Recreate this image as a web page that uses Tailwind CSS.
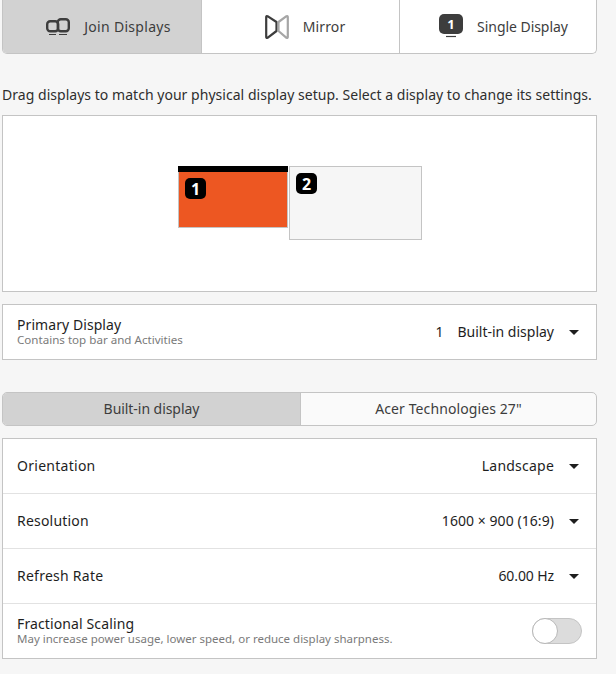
<!DOCTYPE html>
<html><head><meta charset="utf-8"><script src="https://cdn.jsdelivr.net/npm/@tailwindcss/browser@4"></script></head>
<body class="bg-[#f6f6f6] font-['Noto_Sans',sans-serif] text-[14px] text-[#1e1e1e] overflow-hidden">
<div class="w-[616px] h-[674px] pl-[2px] pr-[19px] flex flex-col">
  <div class="flex h-[54px] border border-t-0 border-[#c4c4c4] rounded-b-[5px] bg-white overflow-hidden text-[#3d3d3d]">
    <div class="w-[199px] bg-[#d2d2d2] border-r border-[#c4c4c4] flex items-center justify-center gap-[14px] pl-[13px]">
      <svg width="24" height="20" viewBox="0 0 24 20" fill="none"><rect x="1.2" y="4.2" width="11" height="10" rx="3" stroke="#3d3d3d" stroke-width="2.4"/><rect x="11.8" y="2.2" width="11" height="12" rx="3" stroke="#3d3d3d" stroke-width="2.4"/><path d="M3 17.5h7M13 17.5h8" stroke="#3d3d3d" stroke-width="1.2"/></svg>
      <span class="tracking-[0.3px]">Join Displays</span>
    </div>
    <div class="w-[198px] border-r border-[#c4c4c4] flex items-center justify-center gap-[14px] pl-[9px]">
      <svg width="24" height="26" viewBox="0 0 24 26" fill="none"><path d="M11.5 8 L2.5 2.2 Q1.2 1.6 1.2 3 V23 Q1.2 24.4 2.5 23.8 L11.5 17 Z" stroke="#3d3d3d" stroke-width="2.2" stroke-linejoin="round"/><path d="M13.5 8 L21.5 2.2 Q22.8 1.6 22.8 3 V23 Q22.8 24.4 21.5 23.8 L13.5 17 Z" stroke="#a6a6a6" stroke-width="2.2" stroke-linejoin="round"/></svg>
      <span class="tracking-[0.15px]">Mirror</span>
    </div>
    <div class="flex-1 flex items-center justify-center gap-[14px] pl-[11px]">
      <svg class="-translate-y-[1px]" width="24" height="24" viewBox="0 0 24 24" fill="none"><rect x="0" y="0" width="24" height="20" rx="5" fill="#3d3d3d"/><path d="M7 22.5h10" stroke="#3d3d3d" stroke-width="1.2"/><text x="12" y="15" text-anchor="middle" font-size="13" font-weight="700" fill="#fff" font-family="Noto Sans">1</text></svg>
      <span class="tracking-[-0.05px]">Single Display</span>
    </div>
  </div>

  <p class="mt-[30px] h-[21px] leading-[21px] whitespace-nowrap text-[#2e2e2e] tracking-[0.033px]">Drag displays to match your physical display setup. Select a display to change its settings.</p>

  <div class="relative mt-[10px] h-[177px] bg-white border border-[#c4c4c4]">
    <div class="absolute left-[175px] top-[50px] w-[110px] h-[62px] bg-[#ed5722] border border-[#c4c4c4] border-t-0">
      <div class="h-[6px] bg-black -mx-[1px]"></div>
      <div class="absolute left-[6px] top-[12px] w-[21px] h-[21px] rounded-[5px] bg-black text-white font-bold text-[16px] flex items-center justify-center leading-none">1</div>
    </div>
    <div class="absolute left-[286px] top-[50px] w-[133px] h-[74px] bg-[#f6f6f6] border border-[#c4c4c4]">
      <div class="absolute left-[6px] top-[6px] w-[21px] h-[21px] rounded-[5px] bg-black text-white font-bold text-[16px] flex items-center justify-center leading-none">2</div>
    </div>
  </div>

  <div class="mt-[12px] h-[56px] bg-white border border-[#c4c4c4] flex items-center pl-[14px] pr-[17px]">
    <div class="flex-1 flex flex-col">
      <span class="leading-[16px] text-[#1e1e1e] tracking-[0.07px]">Primary Display</span>
      <span class="text-[11.6px] leading-[14px] text-[#7a7a7a]">Contains top bar and Activities</span>
    </div>
    <span class="mr-[14px] pb-[2px]">1</span>
    <span class="pb-[2px]">Built-in display</span>
    <svg class="ml-[15px]" width="10" height="5" viewBox="0 0 10 5"><path d="M0 0h10L5 5z" fill="#1e1e1e"/></svg>
  </div>

  <div class="mt-[32px] h-[34px] flex bg-[#fafafa] border border-[#c4c4c4] rounded-[5px] overflow-hidden text-[#3d3d3d]">
    <div class="w-[298px] bg-[#d2d2d2] border-r border-[#c4c4c4] flex items-center justify-center pb-[2px] tracking-[-0.05px]">Built-in display</div>
    <div class="flex-1 flex items-center justify-center pb-[2px] tracking-[0.1px]">Acer Technologies 27"</div>
  </div>

  <div class="mt-[12px] h-[221px] bg-white border border-[#c4c4c4] flex flex-col">
    <div class="h-[55px] border-b border-[#e2e2e2] flex items-center pl-[14px] pr-[17px]">
      <span class="flex-1 pb-[2px] tracking-[0.27px]">Orientation</span><span class="pb-[2px] tracking-[0.22px]">Landscape</span>
      <svg class="ml-[15px]" width="10" height="5" viewBox="0 0 10 5"><path d="M0 0h10L5 5z" fill="#1e1e1e"/></svg>
    </div>
    <div class="h-[55px] border-b border-[#e2e2e2] flex items-center pl-[14px] pr-[17px]">
      <span class="flex-1 pb-[2px] tracking-[0.2px]">Resolution</span><span class="pb-[2px] tracking-[0.06px]">1600 × 900 (16:9)</span>
      <svg class="ml-[15px]" width="10" height="5" viewBox="0 0 10 5"><path d="M0 0h10L5 5z" fill="#1e1e1e"/></svg>
    </div>
    <div class="h-[55px] border-b border-[#e2e2e2] flex items-center pl-[14px] pr-[17px]">
      <span class="flex-1 pb-[2px] tracking-[0.25px]">Refresh Rate</span><span class="pb-[2px] tracking-[-0.1px]">60.00 Hz</span>
      <svg class="ml-[15px]" width="10" height="5" viewBox="0 0 10 5"><path d="M0 0h10L5 5z" fill="#1e1e1e"/></svg>
    </div>
    <div class="flex-1 flex items-center pl-[14px] pr-[14px]">
      <div class="flex-1 flex flex-col">
        <span class="leading-[16px] tracking-[0.12px]">Fractional Scaling</span>
        <span class="text-[11.5px] leading-[14px] text-[#7a7a7a]">May increase power usage, lower speed, or reduce display sharpness.</span>
      </div>
      <div class="w-[50px] h-[26px] rounded-full bg-[#dcdcdc] border border-[#c4c4c4] relative">
        <div class="absolute -left-[1px] -top-[1px] w-[26px] h-[26px] rounded-full bg-white border border-[#b8b8b8]"></div>
      </div>
    </div>
  </div>
</div>
</body></html>
